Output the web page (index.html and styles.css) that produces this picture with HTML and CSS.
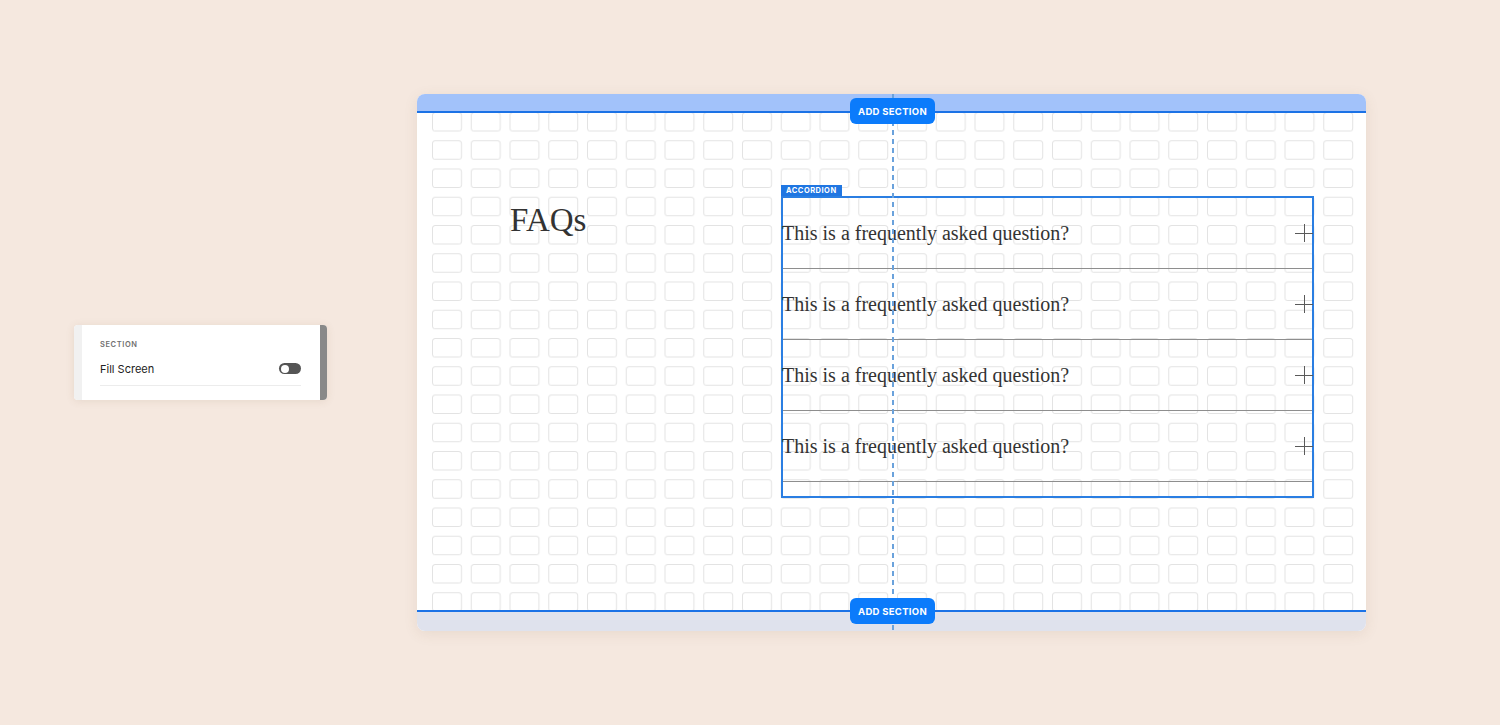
FILE: index.html
```html
<!DOCTYPE html>
<html lang="en">
<head>
<meta charset="utf-8">
<title>Section editor</title>
<link rel="stylesheet" href="styles.css">
</head>
<body>
<main class="stage">
  <aside class="panel">
    <div class="panel-edge"></div>
    <div class="panel-body">
      <div class="panel-label">SECTION</div>
      <div class="panel-row">
        <span class="panel-text">Fill Screen</span>
        <span class="toggle"><span class="knob"></span></span>
      </div>
    </div>
    <div class="panel-bar"></div>
  </aside>

  <section class="frame">
    <div class="topbar"></div>
    <div class="canvas">
      <svg class="cells" width="100%" height="100%" aria-hidden="true">
        <defs>
          <pattern id="cell" x="15" y="-1" width="38.75" height="28.25" patternUnits="userSpaceOnUse">
            <rect x="0.5" y="0.5" width="29" height="18.5" rx="3" fill="none" stroke="#e3e3e3"/>
          </pattern>
        </defs>
        <rect x="15" y="0" width="922" height="100%" fill="url(#cell)"/>
      </svg>
      <div class="content">
        <h1 class="faq-title">FAQs</h1>
        <div class="accordion">
          <div class="accordion-tag">ACCORDION</div>
          <div class="accordion-box">
            <div class="item"><span class="question">This is a frequently asked question?</span><svg class="plus" width="18" height="18" viewBox="0 0 18 18"><path d="M0 9.5H18M9.5 0V18" stroke="#5a5a5a" stroke-width="1"/></svg></div>
            <div class="item"><span class="question">This is a frequently asked question?</span><svg class="plus" width="18" height="18" viewBox="0 0 18 18"><path d="M0 9.5H18M9.5 0V18" stroke="#5a5a5a" stroke-width="1"/></svg></div>
            <div class="item"><span class="question">This is a frequently asked question?</span><svg class="plus" width="18" height="18" viewBox="0 0 18 18"><path d="M0 9.5H18M9.5 0V18" stroke="#5a5a5a" stroke-width="1"/></svg></div>
            <div class="item"><span class="question">This is a frequently asked question?</span><svg class="plus" width="18" height="18" viewBox="0 0 18 18"><path d="M0 9.5H18M9.5 0V18" stroke="#5a5a5a" stroke-width="1"/></svg></div>
          </div>
        </div>
      </div>
    </div>
    <div class="bottombar"></div>
    <div class="center-guide"></div>
    <button class="add-section add-top">ADD SECTION</button>
    <button class="add-section add-bottom">ADD SECTION</button>
  </section>
</main>
</body>
</html>
```

FILE: styles.css
```css
* { box-sizing: border-box; }

html, body {
  margin: 0;
  height: 100%;
}

body {
  background: #f5e8df;
  font-family: "Inter", "Liberation Sans", sans-serif;
  overflow: hidden;
}

.stage {
  display: flex;
  align-items: flex-start;
  padding-left: 74px;
}

/* ---- settings panel ---- */
.panel {
  display: flex;
  width: 253px;
  height: 75px;
  margin-top: 325px;
  background: #fff;
  border-radius: 4px;
  overflow: hidden;
  box-shadow: 0 1px 8px rgba(120, 90, 60, 0.12);
}

.panel-edge {
  width: 8px;
  background: #f1f1f1;
}

.panel-body {
  flex: 1;
  padding: 15px 19px 0 18px;
}

.panel-bar {
  width: 7px;
  background: #898989;
}

.panel-label {
  font-size: 7.5px;
  line-height: 9px;
  font-weight: 600;
  letter-spacing: 0.6px;
  color: #6f6f6f;
}

.panel-row {
  display: flex;
  align-items: center;
  justify-content: space-between;
  height: 29px;
  margin-top: 8px;
  padding: 1px 0 6px;
  border-bottom: 1px solid #ececec;
}

.panel-text {
  font-size: 11px;
  color: #222;
}

.toggle {
  display: flex;
  align-items: center;
  width: 22px;
  height: 11px;
  padding: 0 2px;
  border-radius: 6px;
  background: #555;
}

.knob {
  width: 8px;
  height: 8px;
  border-radius: 50%;
  background: #fff;
}

/* ---- page frame ---- */
.frame {
  position: relative;
  display: flex;
  flex-direction: column;
  width: 949px;
  height: 537px;
  margin-top: 94px;
  margin-left: 90px;
  background: #fff;
  border-radius: 8px;
  overflow: hidden;
  box-shadow: 0 3px 14px rgba(120, 90, 60, 0.10);
}

.topbar {
  height: 19px;
  background: #a2c2fa;
  border-bottom: 2px solid #1b72e6;
}

.bottombar {
  height: 21px;
  background: #dfe2ed;
  border-top: 2px solid #1b72e6;
}

.canvas {
  flex: 1;
  display: grid;
}

.canvas > * {
  grid-area: 1 / 1;
}

.cells {
  display: block;
}

.content {
  display: flex;
  align-items: flex-start;
  padding: 72px 0 0 93px;
  color: #333;
}

.faq-title {
  flex: 0 0 271px;
  margin: 19px 0 0;
  font-family: "Liberation Serif", serif;
  font-weight: 400;
  font-size: 33px;
  line-height: 33px;
}

.accordion {
  width: 533px;
}

.accordion-tag {
  width: max-content;
  height: 11px;
  padding: 0 5px;
  background: #1f76e2;
  color: #fff;
  font-size: 7.5px;
  font-weight: 700;
  line-height: 11px;
  letter-spacing: 0.5px;
}

.accordion-box {
  border: 2px solid #2a7ee2;
  padding-bottom: 14px;
}

.item {
  display: flex;
  align-items: center;
  justify-content: space-between;
  height: 71px;
  border-bottom: 1px solid #8e8e8e;
}

.question {
  font-family: "Liberation Serif", serif;
  font-size: 20px;
  color: #333;
  margin-left: -1px;
}

.plus {
  margin-right: -1px;
  flex: none;
}

/* ---- overlays ---- */
.center-guide {
  position: absolute;
  top: 0;
  bottom: 0;
  left: 475px;
  width: 2px;
  background: repeating-linear-gradient(to bottom, #6aa2dc 0 5px, transparent 5px 9px);
}

.add-section {
  position: absolute;
  left: 433px;
  width: 85px;
  height: 26px;
  border: 0;
  border-radius: 6px;
  background: #0b7bfb;
  color: #fff;
  font-family: "Inter", "Liberation Sans", sans-serif;
  font-size: 9.5px;
  font-weight: 700;
  letter-spacing: 0.3px;
  padding: 0;
}

.add-top { top: 4px; }
.add-bottom { top: 504px; }
```
